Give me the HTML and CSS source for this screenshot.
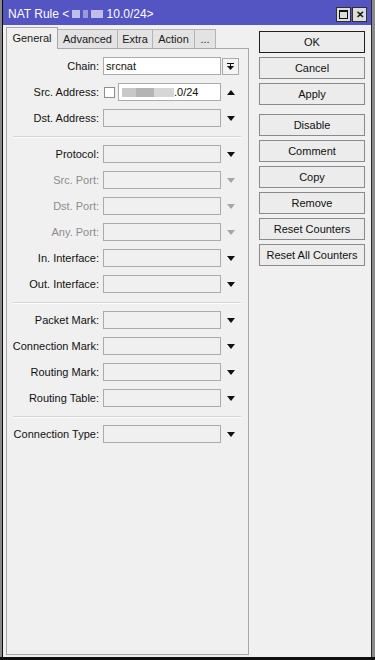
FILE: index.html
```html
<!DOCTYPE html>
<html lang="en">
<head>
  <meta charset="UTF-8" />
  <meta name="viewport" content="width=device-width, initial-scale=1.0"/>
  <title>NAT Rule</title>
  <link rel="stylesheet" href="styles.css">
</head>
<body>
  <div class="window">
    <div class="titlebar">
      <div class="title">NAT Rule &lt;<span class="blur b1"></span><span class="blur b2"></span><span class="blur b3"></span> 10.0/24&gt;</div>
      <div class="title-buttons">
        <span class="tbtn max"></span>
        <span class="tbtn close">✕</span>
      </div>
    </div>

    <div class="main">
      <div class="left">
        <div class="tabs">
          <div class="tab active" style="width:52px">General</div>
          <div class="tab" style="width:61px">Advanced</div>
          <div class="tab" style="width:36px">Extra</div>
          <div class="tab" style="width:43px">Action</div>
          <div class="tab" style="width:22px">...</div>
        </div>

        <div class="panel">
          <div class="group">
            <div class="row">
              <label>Chain:</label>
              <div class="field white">srcnat</div>
              <div class="dropbtn">
                <svg width="7" height="7" viewBox="0 0 7 7"><rect x="0" y="0" width="7" height="1"/><rect x="3" y="1" width="1" height="2"/><path d="M0 3h7l-3.5 4z"/></svg>
              </div>
            </div>
            <div class="row">
              <label>Src. Address:</label>
              <span class="check"></span>
              <div class="field white short"><span class="blur s1"></span><span class="blur s2"></span><span class="blur s3"></span>.0/24</div>
              <span class="arrow up"></span>
            </div>
            <div class="row">
              <label>Dst. Address:</label>
              <div class="field"></div>
              <span class="arrow"></span>
            </div>
          </div>

          <div class="sep"></div>

          <div class="group">
            <div class="row">
              <label>Protocol:</label>
              <div class="field"></div>
              <span class="arrow"></span>
            </div>
            <div class="row disabled">
              <label>Src. Port:</label>
              <div class="field"></div>
              <span class="arrow"></span>
            </div>
            <div class="row disabled">
              <label>Dst. Port:</label>
              <div class="field"></div>
              <span class="arrow"></span>
            </div>
            <div class="row disabled">
              <label>Any. Port:</label>
              <div class="field"></div>
              <span class="arrow"></span>
            </div>
            <div class="row">
              <label>In. Interface:</label>
              <div class="field"></div>
              <span class="arrow"></span>
            </div>
            <div class="row">
              <label>Out. Interface:</label>
              <div class="field"></div>
              <span class="arrow"></span>
            </div>
          </div>

          <div class="sep"></div>

          <div class="group">
            <div class="row">
              <label>Packet Mark:</label>
              <div class="field"></div>
              <span class="arrow"></span>
            </div>
            <div class="row">
              <label>Connection Mark:</label>
              <div class="field"></div>
              <span class="arrow"></span>
            </div>
            <div class="row">
              <label>Routing Mark:</label>
              <div class="field"></div>
              <span class="arrow"></span>
            </div>
            <div class="row">
              <label>Routing Table:</label>
              <div class="field"></div>
              <span class="arrow"></span>
            </div>
          </div>

          <div class="sep"></div>

          <div class="group">
            <div class="row">
              <label>Connection Type:</label>
              <div class="field"></div>
              <span class="arrow"></span>
            </div>
          </div>
        </div>
      </div>

      <div class="actions">
        <button class="default">OK</button>
        <button>Cancel</button>
        <button>Apply</button>
        <button class="spaced">Disable</button>
        <button>Comment</button>
        <button>Copy</button>
        <button>Remove</button>
        <button>Reset Counters</button>
        <button>Reset All Counters</button>
      </div>
    </div>
  </div>
</body>
</html>
```

FILE: styles.css
```css
html, body {
  margin: 0;
  padding: 0;
  width: 375px;
  height: 660px;
  overflow: hidden;
  background: linear-gradient(#8a8a8a 657px, #101010 657px);
  font-family: 'Liberation Sans', Arial, sans-serif;
  font-size: 11px;
  color: #111;
}
.window {
  margin-left: 2px;
  width: 370px;
  height: 657px;
  box-sizing: border-box;
  border-left: 1px solid #0a0a0a;
  border-right: 1px solid #2a2a2a;
  background: #f0f0f0;
  display: flex;
  flex-direction: column;
}
.titlebar {
  height: 25px;
  flex: none;
  background: #5454c2;
  color: #fff;
  display: flex;
  align-items: flex-end;
  justify-content: space-between;
  padding: 0 4px 3px 5px;
  box-sizing: border-box;
}
.title {
  font-size: 12px;
  line-height: 14px;
  padding-bottom: 1px;
  display: flex;
  align-items: center;
  white-space: pre;
}
.blur {
  display: inline-block;
  height: 8px;
  background: rgba(225, 225, 245, 0.75);
}
.b1 { width: 8px; margin-left: 3px; }
.b2 { width: 5px; margin-left: 3px; background: rgba(225, 225, 245, 0.5); }
.b3 { width: 12px; margin-left: 3px; }
.title-buttons {
  display: flex;
  gap: 1px;
}
.tbtn {
  width: 13px;
  height: 13px;
  background: #dcdcdc;
  border: 1px solid #303030;
  display: flex;
  align-items: center;
  justify-content: center;
  color: #111;
  font-size: 10px;
  font-weight: bold;
  line-height: 1;
}
.tbtn.max::after {
  content: "";
  width: 7px;
  height: 6px;
  border: 1px solid #111;
  border-top-width: 2px;
}
.main {
  flex: 1;
  display: flex;
  padding: 2px 6px 2px 3px;
  gap: 10px;
  min-height: 0;
}
.left {
  width: 243px;
  display: flex;
  flex-direction: column;
}
.tabs {
  height: 21px;
  display: flex;
  align-items: flex-end;
}
.tab {
  height: 19px;
  box-sizing: border-box;
  border: 1px solid #b4b4b4;
  border-bottom: none;
  background: #e3e3e3;
  margin-left: -1px;
  display: flex;
  align-items: center;
  justify-content: center;
  color: #1a1a1a;
}
.tab.active {
  height: 22px;
  margin-left: 0;
  margin-bottom: -1px;
  background: #f0f0f0;
  border-color: #a8a8a8;
  position: relative;
  z-index: 1;
  padding-bottom: 2px;
}
.panel {
  flex: 1;
  border: 1px solid #a8a8a8;
  padding-top: 8px;
}
.group {
  display: flex;
  flex-direction: column;
  gap: 8px;
}
.sep {
  margin: 9px 7px 7px 6px;
  height: 1px;
  background: #d6d6d6;
  border-bottom: 1px solid #fcfcfc;
}
.row {
  display: flex;
  align-items: center;
  height: 18px;
}
.row label {
  width: 92px;
  text-align: right;
  margin-right: 4px;
  white-space: nowrap;
}
.row.disabled label {
  color: #8d8d8d;
}
.field {
  width: 118px;
  height: 18px;
  box-sizing: border-box;
  border: 1px solid #ababab;
  padding-left: 2px;
  display: flex;
  align-items: center;
}
.field.white {
  background: #fff;
}
.field.short {
  width: 103px;
  margin-left: 3px;
}
.blur.s1, .blur.s2, .blur.s3 {
  height: 9px;
  background: #c8c8c8;
}
.s1 { width: 14px; margin-left: 1px; }
.s2 { width: 18px; background: #b4b4b4 !important; }
.s3 { width: 20px; background: #d6d6d6 !important; }
.check {
  width: 11px;
  height: 11px;
  box-sizing: border-box;
  border: 1px solid #8e8e8e;
  background: #fff;
  margin-left: 1px;
}
.dropbtn {
  width: 17px;
  height: 17px;
  box-sizing: border-box;
  margin-left: 1px;
  border: 1px solid #ababab;
  background: #f4f4f4;
  display: flex;
  align-items: center;
  justify-content: center;
}
.dropbtn svg {
  fill: #111;
}
.arrow {
  width: 0;
  height: 0;
  margin-left: 6px;
  border-left: 4px solid transparent;
  border-right: 4px solid transparent;
  border-top: 5px solid #111;
}
.arrow.up {
  border-top: none;
  border-bottom: 5px solid #111;
}
.row.disabled .arrow {
  border-top-color: #a5a5a5;
}
.actions {
  width: 106px;
  display: flex;
  flex-direction: column;
  gap: 4px;
  padding-top: 4px;
}
button {
  height: 22px;
  width: 106px;
  font-family: 'Liberation Sans', Arial, sans-serif;
  font-size: 11px;
  color: #111;
  background: #ececec;
  border: 1px solid #8a8a8a;
  padding: 0;
  margin: 0;
}
button.default {
  border-color: #202020;
}
button.spaced {
  margin-top: 5px;
}
```
